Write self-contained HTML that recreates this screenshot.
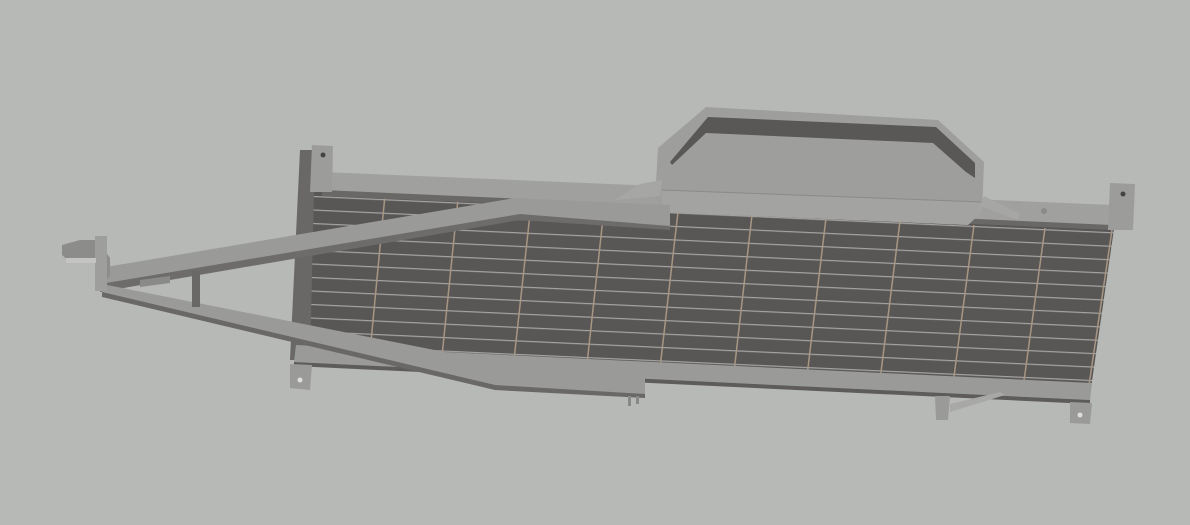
<!DOCTYPE html>
<html><head><meta charset="utf-8"><style>html,body{margin:0;padding:0;background:#b7b9b7;}svg{display:block}</style></head>
<body>
<svg width="1190" height="525" viewBox="0 0 1190 525" xmlns="http://www.w3.org/2000/svg">
<defs>
<pattern id="slats" width="60" height="13.5" patternUnits="userSpaceOnUse" patternTransform="rotate(2.6)">
<rect width="60" height="13.5" fill="#595755"/>
<rect y="6" width="60" height="1.2" fill="#a5a4a2"/>
</pattern>
</defs>
<rect width="1190" height="525" fill="#b7b9b7"/>
<!-- deck -->
<polygon points="305,185 1115,222 1090,395 292,352" fill="url(#slats)"/>
<polygon points="300,150 315,150 310,360 290,360" fill="#6a6866"/>
<!-- crossmembers -->
<g stroke="#a89684" stroke-width="1.5">
<line x1="385" y1="195" x2="370" y2="352"/>
<line x1="458" y1="199" x2="442" y2="356"/>
<line x1="530" y1="214" x2="514" y2="360"/>
<line x1="603" y1="218" x2="587" y2="364"/>
<line x1="678" y1="212" x2="660" y2="368"/>
<line x1="752" y1="215" x2="734" y2="372"/>
<line x1="826" y1="218" x2="807" y2="376"/>
<line x1="900" y1="221" x2="880" y2="380"/>
<line x1="974" y1="225" x2="953" y2="384"/>
<line x1="1045" y1="228" x2="1023" y2="388"/>
<line x1="1112" y1="230" x2="1088" y2="392"/>
</g>
<!-- bottom rail -->
<polygon points="296,345 1092,383 1090,400 294,362" fill="#9a9a99"/>
<polygon points="294,362 1090,400 1090,404 294,366" fill="#5e5c5a"/>
<!-- top rail -->
<polygon points="322,172 1112,205 1112,227 322,192" fill="#a0a09f"/>
<polygon points="322,190 1112,225 1112,230 322,196" fill="#6a6866"/>
<!-- corner posts -->
<polygon points="312,145 333,146 332,192 310,192" fill="#9c9c9b"/>
<circle cx="323" cy="155" r="2.5" fill="#444"/>
<polygon points="1110,183 1135,184 1133,230 1108,230" fill="#9c9c9b"/>
<circle cx="1123" cy="194" r="2.5" fill="#444"/>
<polygon points="290,364 312,365 310,390 290,388" fill="#9a9a99"/>
<circle cx="300" cy="380" r="2.5" fill="#ddd"/>
<polygon points="1070,402 1092,403 1090,424 1070,423" fill="#9a9a99"/>
<circle cx="1080" cy="415" r="2.5" fill="#ddd"/>
<polygon points="935,396 950,396 948,420 936,420" fill="#9a9a99"/>
<polygon points="950,404 1000,392 1005,395 950,412" fill="#a8a8a7"/>
<!-- front box -->
<polygon points="658,148 706,107 938,120 984,162 982,212 968,225 662,212 655,200" fill="#9e9e9d"/>
<polygon points="670,162 708,117 936,127 975,163 975,178 966,172 933,143 706,133 672,165" fill="#5a5856"/>
<polygon points="662,190 982,202 982,212 968,225 662,212" fill="#a3a3a2"/>
<line x1="662" y1="190" x2="982" y2="202" stroke="#8a8a89" stroke-width="1"/>
<polygon points="640,184 662,180 660,196 615,200" fill="#a6a6a5"/>
<polygon points="984,196 1020,214 1018,220 980,206" fill="#a6a6a5"/>
<circle cx="1044" cy="211" r="3" fill="#8a8a89"/>
<!-- tongue upper arm -->
<polygon points="100,268 515,198 670,205 670,228 520,216 100,288" fill="#9a9a99"/>
<polygon points="100,284 520,214 670,226 670,230 520,220 100,292" fill="#6e6c6a"/>
<!-- tongue lower arm -->
<polygon points="102,284 495,362 645,372 645,396 495,388 102,296" fill="#9a9a99"/>
<polygon points="102,292 495,385 645,394 645,398 495,390 102,297" fill="#6a6866"/>
<rect x="192" y="271" width="8" height="36" fill="#6a6866"/>
<polygon points="140,280 170,276 170,283 140,287" fill="#8a8a89"/>
<!-- coupler -->
<polygon points="62,245 80,240 97,240 110,258 110,275 100,290 95,290 95,262 70,262 62,255" fill="#8c8c8b"/>
<rect x="95" y="236" width="12" height="55" fill="#9e9e9d"/>
<rect x="66" y="258" width="30" height="5" fill="#c4c4c3"/>
<rect x="628" y="396" width="3" height="10" fill="#888"/>
<rect x="636" y="396" width="3" height="8" fill="#888"/>
</svg>
</body></html>
